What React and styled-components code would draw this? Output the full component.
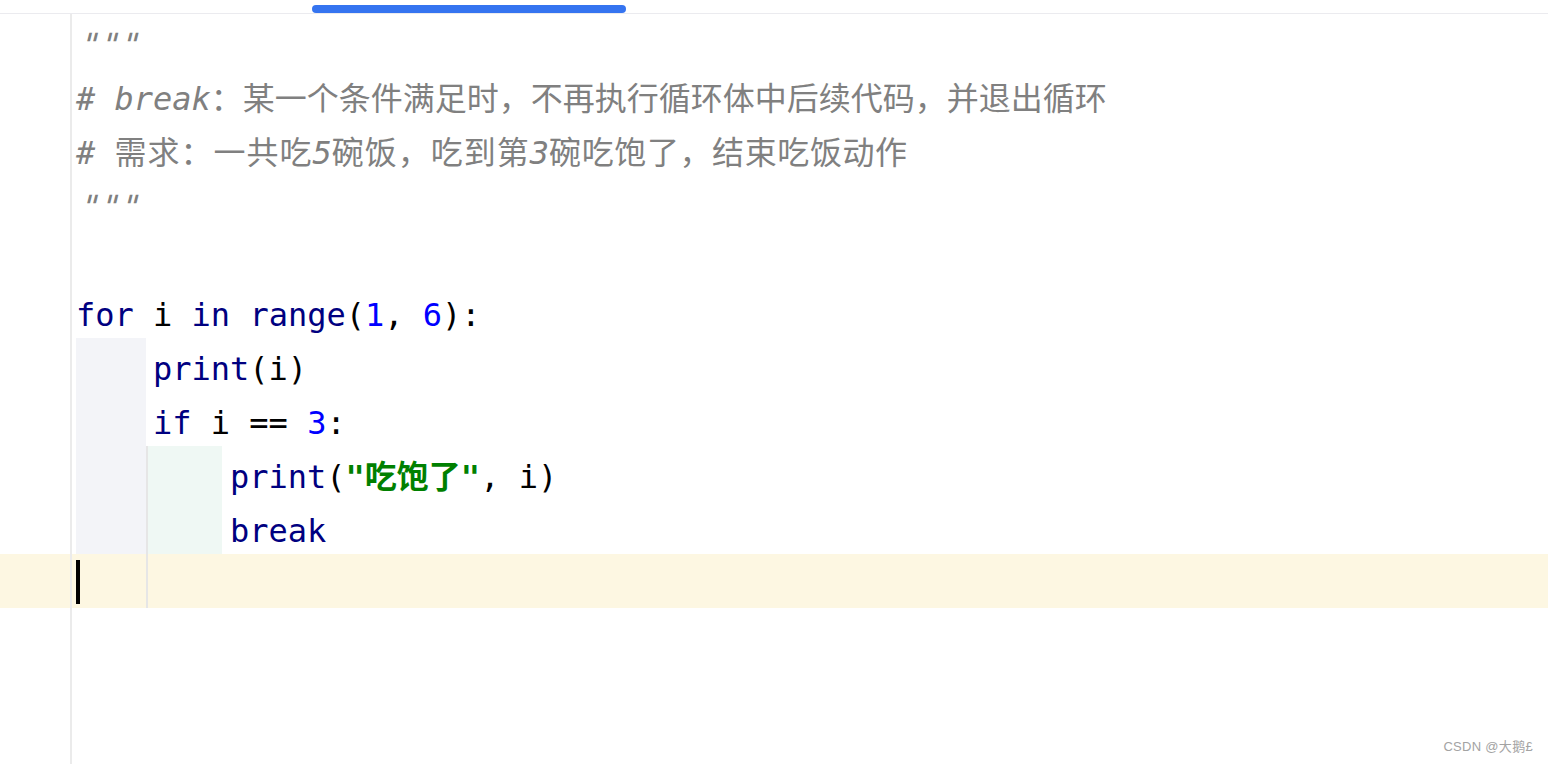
import React from 'react';
import styled, { createGlobalStyle } from 'styled-components';

const GlobalStyle = createGlobalStyle`
  html, body {
    margin: 0;
    padding: 0;
    background: #ffffff;
  }
  body {
    font-family: 'DejaVu Sans Mono', 'Noto Sans CJK SC', monospace;
  }
`;

const Page = styled.div`
  position: relative;
  display: flex;
  flex-direction: column;
  min-height: 100vh;
  overflow: hidden;
`;

const TopBar = styled.div`
  height: 13px;
  display: flex;
  align-items: flex-end;
  border-bottom: 1px solid #ebebef;
`;

const ScrollThumb = styled.div`
  margin-left: 312px;
  width: 314px;
  height: 8px;
  border-radius: 4px;
  background: #3574f0;
`;

const Editor = styled.div`
  flex: 1;
  display: flex;
  flex-direction: column;
`;

const Line = styled.div`
  display: flex;
  height: 54px;
  background: ${(p) => (p.$current ? '#fdf7e2' : 'transparent')};
`;

const Rest = styled.div`
  flex: 1;
  display: flex;
`;

const Gutter = styled.div`
  flex: none;
  width: 70px;
  border-right: 2px solid #ebebeb;
`;

const Code = styled.div`
  display: flex;
  padding-left: 4px;
  flex: 1;
`;

const Indent = styled.div`
  flex: none;
  box-sizing: border-box;
  width: ${(p) => p.$width}px;
  margin-right: ${(p) => p.$trail || 0}px;
  background: ${(p) => p.$fill || 'transparent'};
  border-left: ${(p) => (p.$guide ? '2px solid #e6e6e6' : 'none')};
`;

const Caret = styled.div`
  width: 4px;
  height: 44px;
  margin-top: 6px;
  background: #000000;
`;

const Text = styled.div`
  padding-top: 8px;
  font-family: 'DejaVu Sans Mono', 'Noto Sans CJK SC', monospace;
  font-size: 32px;
  line-height: 46px;
  white-space: pre;
  color: #000000;
`;

const Kw = styled.span`
  color: #000080;
`;

const Num = styled.span`
  color: #0000ff;
`;

const Str = styled.span`
  color: #008000;
  font-weight: bold;
`;

const Comment = styled.span`
  color: #808080;
  font-style: italic;
`;

const Quotes = styled.span`
  display: inline-block;
  margin-left: 5px;
  letter-spacing: 1px;
  transform: skewX(-14deg);
`;

const Han = styled.span`
  font-style: normal;
  letter-spacing: ${(p) => p.$spread || 0}px;
`;

const Watermark = styled.div`
  position: absolute;
  right: 15px;
  bottom: 9px;
  font-family: 'Liberation Sans', 'Noto Sans CJK SC', sans-serif;
  font-size: 13px;
  letter-spacing: 0.3px;
  color: #a3a3a3;
`;

const Level1 = () => <Indent $width={70} $fill="#f3f4f8" />;

export default function App() {
  return (
    <Page>
      <GlobalStyle />
      <TopBar>
        <ScrollThumb />
      </TopBar>
      <Editor>
        <Line>
          <Gutter />
          <Code>
            <Text>
              <Comment><Quotes>"""</Quotes></Comment>
            </Text>
          </Code>
        </Line>
        <Line>
          <Gutter />
          <Code>
            <Text>
              <Comment>
                # break<Han>：某一个条件满足时，不再执行循环体中后续代码，并退出循环</Han>
              </Comment>
            </Text>
          </Code>
        </Line>
        <Line>
          <Gutter />
          <Code>
            <Text>
              <Comment>
                # <Han $spread={1}>需求：一共吃</Han>5<Han $spread={1}>碗饭，吃到第</Han>3<Han $spread={0.6}>碗吃饱了，结束吃饭动作</Han>
              </Comment>
            </Text>
          </Code>
        </Line>
        <Line>
          <Gutter />
          <Code>
            <Text>
              <Comment><Quotes>"""</Quotes></Comment>
            </Text>
          </Code>
        </Line>
        <Line>
          <Gutter />
          <Code />
        </Line>
        <Line>
          <Gutter />
          <Code>
            <Text>
              <Kw>for</Kw> i <Kw>in</Kw> <Kw>range</Kw>(<Num>1</Num>, <Num>6</Num>):
            </Text>
          </Code>
        </Line>
        <Line>
          <Gutter />
          <Code>
            <Indent $width={70} $fill="#f3f4f8" $trail={7} />
            <Text>
              <Kw>print</Kw>(i)
            </Text>
          </Code>
        </Line>
        <Line>
          <Gutter />
          <Code>
            <Indent $width={70} $fill="#f3f4f8" $trail={7} />
            <Text>
              <Kw>if</Kw> i == <Num>3</Num>:
            </Text>
          </Code>
        </Line>
        <Line>
          <Gutter />
          <Code>
            <Level1 />
            <Indent $width={76} $fill="#eff8f4" $guide $trail={8} />
            <Text>
              <Kw>print</Kw>(<Str>"吃饱了"</Str>, i)
            </Text>
          </Code>
        </Line>
        <Line>
          <Gutter />
          <Code>
            <Level1 />
            <Indent $width={76} $fill="#eff8f4" $guide $trail={8} />
            <Text>
              <Kw>break</Kw>
            </Text>
          </Code>
        </Line>
        <Line $current>
          <Gutter />
          <Code>
            <Indent $width={70}>
              <Caret />
            </Indent>
            <Indent $width={2} $guide />
          </Code>
        </Line>
        <Rest>
          <Gutter />
        </Rest>
      </Editor>
      <Watermark>CSDN @大鹅£</Watermark>
    </Page>
  );
}
